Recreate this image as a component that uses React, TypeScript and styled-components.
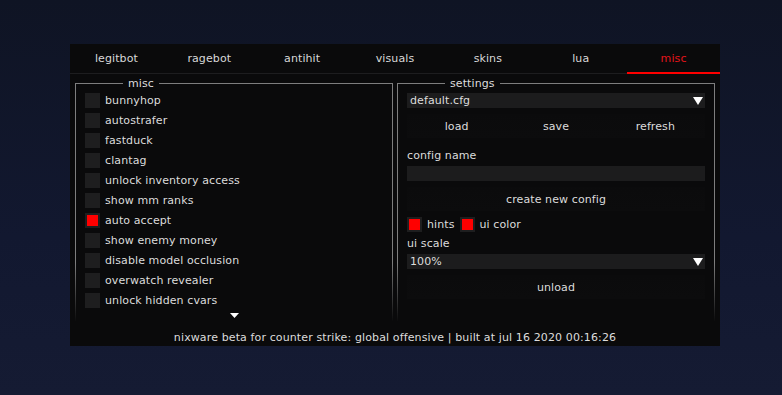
import React from "react";
import styled, { createGlobalStyle } from "styled-components";

const Global = createGlobalStyle`
  html, body { margin: 0; padding: 0; }
  body {
    width: 782px;
    height: 395px;
    overflow: hidden;
    background: linear-gradient(180deg, #0f1424 0%, #121830 60%, #151b33 100%);
    font-family: "DejaVu Sans", Verdana, sans-serif;
    font-size: 11px;
    color: #dcdcdc;
  }
`;

const Page = styled.div`
  padding: 44px 0 0 70px;
`;

const Window = styled.div`
  width: 650px;
  height: 302px;
  background: #0a0a0b;
  display: flex;
  flex-direction: column;
`;

const TabBar = styled.div`
  display: grid;
  grid-template-columns: repeat(7, 1fr);
  height: 29px;
  border-bottom: 1px solid #1d1d1f;
`;

const Tab = styled.div<{ $active?: boolean }>`
  position: relative;
  display: flex;
  align-items: center;
  justify-content: center;
  letter-spacing: 0.1px;
  color: ${(p) => (p.$active ? "#e4141a" : "#d8d8d8")};
  &::after {
    content: "";
    display: ${(p) => (p.$active ? "block" : "none")};
    position: absolute;
    left: 0;
    right: 0;
    bottom: -1px;
    height: 2px;
    background: #f00;
  }
`;

const Content = styled.div`
  display: flex;
  gap: 4px;
  padding: 9px 5px 0 5px;
`;

const Group = styled.div`
  position: relative;
  width: 318px;
  height: 238px;
  box-sizing: border-box;
  border-top: 1px solid #7e7e7e;
  border-left: 1px solid transparent;
  border-right: 1px solid transparent;
  border-image: linear-gradient(180deg, #7e7e7e 0%, #7e7e7e 75%, rgba(126,126,126,0) 100%) 1;
  border-bottom: 0;
  padding: 9px 9px 0 9px;
  display: flex;
  flex-direction: column;
`;

const GroupTitle = styled.span<{ $left: number }>`
  position: absolute;
  top: -8px;
  left: ${(p) => p.$left}px;
  padding: 0 5px;
  line-height: 15px;
  background: #0a0a0b;
  color: #dcdcdc;
  letter-spacing: 0.1px;
`;

const CheckList = styled.div`
  display: flex;
  flex-direction: column;
  gap: 5px;
`;

const CheckRow = styled.div`
  display: flex;
  align-items: center;
  gap: 5px;
  height: 15px;
  line-height: 16px;
  white-space: nowrap;
  letter-spacing: 0.1px;
`;

const Box = styled.span<{ $on?: boolean }>`
  width: 15px;
  height: 15px;
  box-sizing: border-box;
  background: #1e1e1f;
  display: flex;
  align-items: center;
  justify-content: center;
  flex: none;
  &::before {
    content: "";
    display: ${(p) => (p.$on ? "block" : "none")};
    width: 11px;
    height: 11px;
    background: #ff0000;
  }
`;

const ScrollArrow = styled.div`
  margin-top: auto;
  margin-bottom: 3px;
  display: flex;
  justify-content: center;
`;

const Select = styled.div<{ $mt?: number }>`
  margin-top: ${(p) => p.$mt ?? 0}px;
  height: 15px;
  line-height: 15px;
  background: #1c1c1d;
  display: flex;
  align-items: center;
  justify-content: space-between;
  padding: 0 2px 0 3px;
  letter-spacing: 0.1px;
`;

const ButtonRow = styled.div<{ $mt?: number }>`
  margin-top: ${(p) => p.$mt ?? 0}px;
  display: grid;
  grid-auto-flow: column;
  grid-auto-columns: 1fr;
`;

const Button = styled.div`
  height: 24px;
  display: flex;
  align-items: center;
  justify-content: center;
  background: linear-gradient(180deg, #0b0b0c 0%, #0c0c0d 100%);
  color: #dcdcdc;
  letter-spacing: 0.1px;
`;

const Label = styled.div<{ $mt?: number }>`
  margin-top: ${(p) => p.$mt ?? 0}px;
  height: 15px;
  line-height: 15px;
  letter-spacing: 0.1px;
`;

const Input = styled.div<{ $mt?: number }>`
  margin-top: ${(p) => p.$mt ?? 0}px;
  height: 15px;
  background: #1c1c1d;
`;

const InlineChecks = styled.div<{ $mt?: number }>`
  margin-top: ${(p) => p.$mt ?? 0}px;
  display: flex;
  align-items: center;
  gap: 5px;
  height: 15px;
  line-height: 15px;
  letter-spacing: 0.1px;
`;

const Footer = styled.div`
  margin-top: auto;
  height: 25px;
  box-sizing: border-box;
  padding-top: 9px;
  line-height: 15px;
  text-align: center;
  color: #dcdcdc;
  letter-spacing: 0.12px;
`;

const Tri = () => (
  <svg width="10" height="8" viewBox="0 0 10 8">
    <polygon points="0,0 10,0 5,8" fill="#ffffff" />
  </svg>
);

const SmallTri = () => (
  <svg width="9" height="5" viewBox="0 0 9 5">
    <polygon points="0,0 9,0 4.5,5" fill="#ffffff" />
  </svg>
);

const tabs = ["legitbot", "ragebot", "antihit", "visuals", "skins", "lua", "misc"];
const items: [string, boolean][] = [
  ["bunnyhop", false],
  ["autostrafer", false],
  ["fastduck", false],
  ["clantag", false],
  ["unlock inventory access", false],
  ["show mm ranks", false],
  ["auto accept", true],
  ["show enemy money", false],
  ["disable model occlusion", false],
  ["overwatch revealer", false],
  ["unlock hidden cvars", false],
];

export default function App() {
  return (
    <Page>
      <Global />
      <Window>
        <TabBar>
          {tabs.map((t) => (
            <Tab key={t} $active={t === "misc"}>
              {t}
            </Tab>
          ))}
        </TabBar>
        <Content>
          <Group>
            <GroupTitle $left={47}>misc</GroupTitle>
            <CheckList>
              {items.map(([t, on]) => (
                <CheckRow key={t}>
                  <Box $on={on} />
                  {t}
                </CheckRow>
              ))}
            </CheckList>
            <ScrollArrow>
              <SmallTri />
            </ScrollArrow>
          </Group>
          <Group>
            <GroupTitle $left={47}>settings</GroupTitle>
            <Select>
              <span>default.cfg</span>
              <Tri />
            </Select>
            <ButtonRow $mt={6}>
              <Button>load</Button>
              <Button>save</Button>
              <Button>refresh</Button>
            </ButtonRow>
            <Label $mt={10}>config name</Label>
            <Input $mt={3} />
            <ButtonRow $mt={6}>
              <Button>create new config</Button>
            </ButtonRow>
            <InlineChecks $mt={6}>
              <Box $on />
              <span>hints</span>
              <Box $on />
              <span>ui color</span>
            </InlineChecks>
            <Label $mt={4}>ui scale</Label>
            <Select $mt={3}>
              <span>100%</span>
              <Tri />
            </Select>
            <ButtonRow $mt={6}>
              <Button>unload</Button>
            </ButtonRow>
          </Group>
        </Content>
        <Footer>nixware beta for counter strike: global offensive | built at jul 16 2020 00:16:26</Footer>
      </Window>
    </Page>
  );
}
